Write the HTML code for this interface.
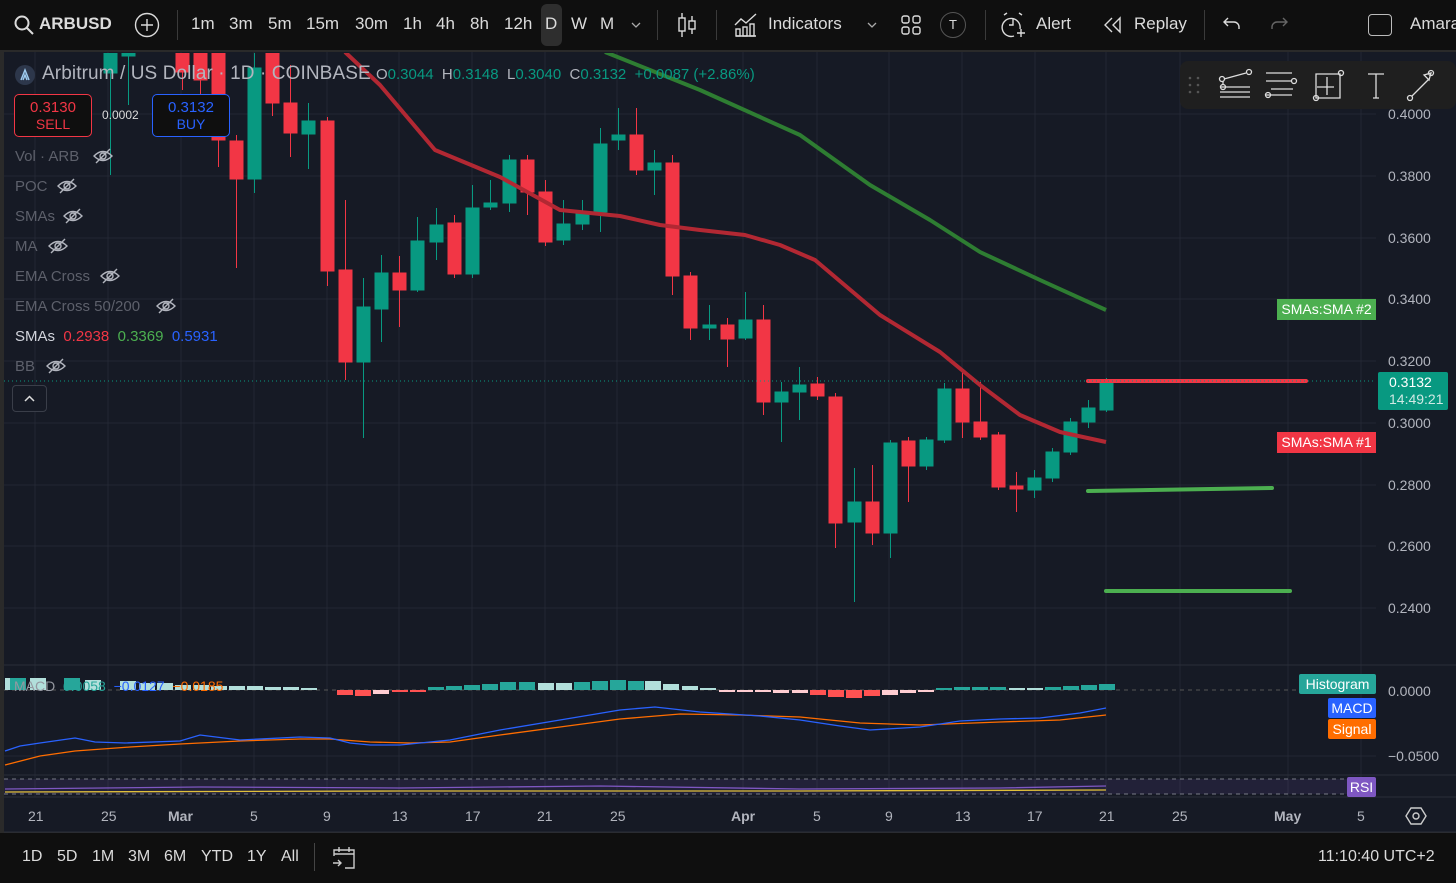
<!DOCTYPE html>
<html><head><meta charset="utf-8"><style>
*{margin:0;padding:0;box-sizing:border-box}
body{width:1456px;height:883px;overflow:hidden;background:#0f0f0f;font-family:"Liberation Sans",sans-serif;color:#d1d4dc;position:relative}
.a{position:absolute;white-space:nowrap}
.tb{font-size:17px;color:#dbdbdb;top:14px}
.sep{position:absolute;top:10px;width:1px;height:30px;background:#3a3a3a}
.leg{font-size:15px;color:#5d606b;left:15px}
.ax{font-size:14px;color:#b2b5be;font-family:"Liberation Sans",sans-serif}
.tl{font-size:14px;color:#b2b5be;top:808px}
.bb{font-size:16px;color:#dbdbdb;top:848px}
.eye{position:absolute;width:22px;height:16px}
</style></head><body>
<!-- top toolbar -->
<svg class="a" style="left:13px;top:14px" width="22" height="22" viewBox="0 0 22 22" fill="none" stroke="#dbdbdb" stroke-width="2"><circle cx="9" cy="9" r="6.5"/><path d="M14 14l6 6"/></svg>
<div class="a tb" style="left:39px;font-weight:bold">ARBUSD</div>
<svg class="a" style="left:134px;top:12px" width="26" height="26" viewBox="0 0 26 26" fill="none" stroke="#dbdbdb" stroke-width="1.4"><circle cx="13" cy="13" r="11.5"/><path d="M13 7v12M7 13h12"/></svg>
<div class="sep" style="left:177px"></div>
<div class="a" style="left:541px;top:4px;width:21px;height:42px;background:#2e2e2e;border-radius:6px"></div>
<div class="a tb" style="left:191px">1m</div><div class="a tb" style="left:229px">3m</div><div class="a tb" style="left:268px">5m</div><div class="a tb" style="left:306px">15m</div><div class="a tb" style="left:355px">30m</div><div class="a tb" style="left:403px">1h</div><div class="a tb" style="left:436px">4h</div><div class="a tb" style="left:470px">8h</div><div class="a tb" style="left:504px">12h</div><div class="a tb" style="left:545px">D</div><div class="a tb" style="left:571px">W</div><div class="a tb" style="left:600px">M</div>
<svg class="a" style="left:630px;top:20px" width="12" height="10" viewBox="0 0 12 10" fill="none" stroke="#aaa" stroke-width="1.3"><path d="M2 3l4 4 4-4"/></svg>
<div class="sep" style="left:657px"></div>
<svg class="a" style="left:676px;top:12px" width="22" height="26" viewBox="0 0 22 26" fill="none" stroke="#dbdbdb" stroke-width="1.4"><path d="M6 1v24M16 4v18"/><rect x="3" y="6" width="6" height="13" fill="#0f0f0f"/><rect x="13" y="9" width="6" height="8" fill="#0f0f0f"/></svg>
<div class="sep" style="left:716px"></div>
<svg class="a" style="left:733px;top:12px" width="26" height="26" viewBox="0 0 26 26" fill="none" stroke="#dbdbdb" stroke-width="1.4"><path d="M2 13l6-6 5 4 10-9M3 24h20"/><rect x="3" y="17" width="4" height="7"/><rect x="10" y="15" width="4" height="9"/><rect x="17" y="12" width="4" height="12"/></svg>
<div class="a tb" style="left:768px">Indicators</div>
<svg class="a" style="left:866px;top:20px" width="12" height="10" viewBox="0 0 12 10" fill="none" stroke="#aaa" stroke-width="1.3"><path d="M2 3l4 4 4-4"/></svg>
<svg class="a" style="left:900px;top:14px" width="22" height="22" viewBox="0 0 22 22" fill="none" stroke="#dbdbdb" stroke-width="1.4"><rect x="2" y="2" width="7" height="7" rx="2"/><rect x="13" y="2" width="7" height="7" rx="2"/><rect x="2" y="13" width="7" height="7" rx="2"/><rect x="13" y="13" width="7" height="7" rx="2"/></svg>
<div class="a" style="left:940px;top:12px;width:26px;height:26px;border:1px solid #555;border-radius:50%;font-size:13px;text-align:center;line-height:24px;color:#dbdbdb">T</div>
<div class="sep" style="left:985px"></div>
<svg class="a" style="left:1000px;top:11px" width="28" height="28" viewBox="0 0 28 28" fill="none" stroke="#dbdbdb" stroke-width="1.4"><path d="M20 18a9 9 0 1 0-6 7"/><path d="M13 8v6h-4M4 4l3-2M22 4l-3-2M21 18v8M17 22h8"/></svg>
<div class="a tb" style="left:1036px">Alert</div>
<svg class="a" style="left:1102px;top:16px" width="22" height="18" viewBox="0 0 22 18" fill="none" stroke="#dbdbdb" stroke-width="1.4"><path d="M10 2L3 9l7 7M18 2l-7 7 7 7z"/></svg>
<div class="a tb" style="left:1134px">Replay</div>
<div class="sep" style="left:1204px"></div>
<svg class="a" style="left:1222px;top:15px" width="20" height="18" viewBox="0 0 20 18" fill="none" stroke="#dbdbdb" stroke-width="1.4"><path d="M6 3L2 7l4 4M2 7h10a5 5 0 0 1 5 5v2"/></svg>
<svg class="a" style="left:1269px;top:15px" width="20" height="18" viewBox="0 0 20 18" fill="none" stroke="#666" stroke-width="1.4"><path d="M14 3l4 4-4 4M18 7H8a5 5 0 0 0-5 5v2"/></svg>
<div class="a" style="left:1368px;top:14px;width:24px;height:22px;border:1.5px solid #bbb;border-radius:4px"></div>
<div class="a tb" style="left:1410px">Amara</div>

<!-- chart area -->
<div class="a" style="left:0;top:50px;width:1456px;height:783px;background:#2a2a2a"></div>
<div class="a" style="left:4px;top:52px;width:1452px;height:780px;background:#161a25"></div>
<svg class="a" style="left:0;top:0" width="1456" height="883">
<defs><clipPath id="m"><rect x="4" y="53" width="1372" height="612"/></clipPath></defs>
<g stroke="#232733" stroke-width="1">
<path d="M4 114H1376M4 176H1376M4 238H1376M4 299H1376M4 361H1376M4 423H1376M4 485H1376M4 546H1376M4 608H1376"/>
<path d="M35 52V797M108 52V797M181 52V797M254 52V797M327 52V797M399 52V797M472 52V797M545 52V797M617 52V797M743 52V797M817 52V797M889 52V797M962 52V797M1035 52V797M1106 52V797M1180 52V797M1288 52V797M1361 52V797"/>
<path d="M4 756H1376"/>
</g>
<path d="M4 665H1456M4 775H1456M4 797H1456" stroke="#2a2e39"/>
<g clip-path="url(#m)">
<g stroke-width="1">
<g stroke="#089981" fill="#089981">
<path d="M110.5 50V175M128.5 50V105M254.5 50V193M308.5 103V169M363.5 278V438M381.5 255V342M417.5 217V292M436.5 208V260M472.5 185V278M490.5 180V210M509.5 155V212M563.5 200V245M582.5 200V230M600.5 128V232M618.5 108V150M654.5 150V195M709.5 305V340M745.5 292V340M781.5 382V442M799.5 367V420M854.5 468V602M890.5 440V558M926.5 437V470M944.5 383V443M1034.5 470V498M1052.5 448V482M1070.5 418V455M1088.5 400V428M1106.5 378V412"/>
<rect x="104" y="50" width="13" height="23"/><rect x="122" y="50" width="13" height="6"/><rect x="248" y="68" width="13" height="111"/><rect x="302" y="121" width="13" height="13"/><rect x="357" y="307" width="13" height="55"/><rect x="375" y="273" width="13" height="36"/><rect x="411" y="241" width="13" height="49"/><rect x="430" y="225" width="13" height="17"/><rect x="466" y="208" width="13" height="66"/><rect x="484" y="203" width="13" height="4"/><rect x="503" y="160" width="13" height="43"/><rect x="557" y="224" width="13" height="16"/><rect x="576" y="212" width="13" height="12"/><rect x="594" y="144" width="13" height="68"/><rect x="612" y="135" width="13" height="5"/><rect x="648" y="163" width="13" height="7"/><rect x="703" y="325" width="13" height="3"/><rect x="739" y="320" width="13" height="18"/><rect x="775" y="392" width="13" height="10"/><rect x="793" y="385" width="13" height="7"/><rect x="848" y="502" width="13" height="20"/><rect x="884" y="443" width="13" height="90"/><rect x="920" y="440" width="13" height="26"/><rect x="938" y="389" width="13" height="51"/><rect x="1028" y="478" width="13" height="12"/><rect x="1046" y="452" width="13" height="26"/><rect x="1064" y="422" width="13" height="30"/><rect x="1082" y="408" width="13" height="14"/><rect x="1100" y="382" width="13" height="28"/>
</g>
<g stroke="#f23645" fill="#f23645">
<path d="M182.5 50V90M200.5 50V115M218.5 50V167M236.5 135V268M272.5 50V116M290.5 65V157M327.5 117V286M345.5 200V380M399.5 256V327M454.5 215V278M527.5 155V215M545.5 180V246M636.5 108V175M672.5 155V295M690.5 272V340M727.5 318V367M763.5 305V415M817.5 377V400M835.5 393V548M872.5 465V545M908.5 437V502M962.5 372V438M980.5 382V440M998.5 432V490M1016.5 472V512"/>
<rect x="176" y="50" width="13" height="22"/><rect x="194" y="50" width="13" height="30"/><rect x="212" y="50" width="13" height="90"/><rect x="230" y="141" width="13" height="38"/><rect x="266" y="50" width="13" height="53"/><rect x="284" y="103" width="13" height="30"/><rect x="321" y="121" width="13" height="150"/><rect x="339" y="270" width="13" height="92"/><rect x="393" y="273" width="13" height="17"/><rect x="448" y="223" width="13" height="51"/><rect x="521" y="160" width="13" height="32"/><rect x="539" y="192" width="13" height="50"/><rect x="630" y="135" width="13" height="35"/><rect x="666" y="163" width="13" height="113"/><rect x="684" y="276" width="13" height="52"/><rect x="721" y="325" width="13" height="14"/><rect x="757" y="320" width="13" height="82"/><rect x="811" y="384" width="13" height="12"/><rect x="829" y="397" width="13" height="126"/><rect x="866" y="502" width="13" height="31"/><rect x="902" y="441" width="13" height="25"/><rect x="956" y="389" width="13" height="33"/><rect x="974" y="422" width="13" height="15"/><rect x="992" y="435" width="13" height="52"/><rect x="1010" y="486" width="13" height="3"/>
</g>
</g>
<polyline fill="none" stroke="#b22833" stroke-width="4" stroke-linejoin="round" points="345,52 380,85 435,150 500,177 560,210 620,216 660,225 700,230 745,235 780,245 815,260 880,315 940,352 980,385 1020,415 1060,432 1106,442"/>
<polyline fill="none" stroke="#2e7d32" stroke-width="4" stroke-linejoin="round" points="605,52 700,90 800,135 870,185 930,220 980,252 1040,280 1106,310"/>
<path d="M1088 381H1306" stroke="#f23645" stroke-width="4" stroke-linecap="round"/>
<path d="M1088 491L1272 488" stroke="#4caf50" stroke-width="4" stroke-linecap="round"/>
<path d="M1106 591H1290" stroke="#4caf50" stroke-width="4" stroke-linecap="round"/>
<path d="M4 381H1378" stroke="#089981" stroke-dasharray="1 3"/>
</g>
<!-- MACD -->
<path d="M4 690H1376" stroke="#555" stroke-dasharray="4 4"/>
<g fill="#b2dfdb"><rect x="5" y="678" width="12" height="12"/><rect x="30" y="678" width="16" height="12"/><rect x="85" y="680" width="16" height="10"/><rect x="120" y="681" width="16" height="9"/><rect x="139" y="683" width="16" height="7"/><rect x="157" y="683" width="16" height="7"/><rect x="175" y="685" width="16" height="5"/><rect x="193" y="685" width="16" height="5"/><rect x="211" y="686" width="16" height="4"/><rect x="229" y="686" width="16" height="4"/><rect x="247" y="686" width="16" height="4"/><rect x="265" y="687" width="16" height="3"/><rect x="283" y="687" width="16" height="3"/><rect x="301" y="688" width="16" height="2"/><rect x="538" y="683" width="16" height="7"/><rect x="556" y="683" width="16" height="7"/><rect x="645" y="681" width="16" height="9"/><rect x="663" y="684" width="16" height="6"/><rect x="682" y="686" width="16" height="4"/><rect x="700" y="688" width="16" height="2"/><rect x="1009" y="688" width="16" height="2"/><rect x="1027" y="688" width="16" height="2"/></g>
<g fill="#26a69a"><rect x="10" y="678" width="16" height="12"/><rect x="64" y="678" width="16" height="12"/><rect x="428" y="687" width="16" height="3"/><rect x="446" y="686" width="16" height="4"/><rect x="464" y="685" width="16" height="5"/><rect x="482" y="684" width="16" height="6"/><rect x="500" y="682" width="16" height="8"/><rect x="519" y="682" width="16" height="8"/><rect x="574" y="682" width="16" height="8"/><rect x="592" y="681" width="16" height="9"/><rect x="610" y="680" width="16" height="10"/><rect x="628" y="681" width="16" height="9"/><rect x="936" y="688" width="16" height="2"/><rect x="954" y="687" width="16" height="3"/><rect x="972" y="687" width="16" height="3"/><rect x="990" y="687" width="16" height="3"/><rect x="1045" y="687" width="16" height="3"/><rect x="1063" y="686" width="16" height="4"/><rect x="1081" y="685" width="16" height="5"/><rect x="1099" y="684" width="16" height="6"/></g>
<g fill="#ff5252"><rect x="337" y="690" width="16" height="5"/><rect x="355" y="690" width="16" height="6"/><rect x="392" y="690" width="16" height="2"/><rect x="410" y="690" width="16" height="2"/><rect x="810" y="690" width="16" height="5"/><rect x="828" y="690" width="16" height="7"/><rect x="846" y="690" width="16" height="8"/><rect x="864" y="690" width="16" height="6"/></g>
<g fill="#ffcdd2"><rect x="373" y="690" width="16" height="4"/><rect x="719" y="690" width="16" height="2"/><rect x="737" y="690" width="16" height="2"/><rect x="755" y="690" width="16" height="2"/><rect x="773" y="690" width="16" height="3"/><rect x="792" y="690" width="16" height="3"/><rect x="882" y="690" width="16" height="5"/><rect x="900" y="690" width="16" height="3"/><rect x="918" y="690" width="16" height="2"/></g>
<polyline fill="none" stroke="#ff6d00" stroke-width="1.3" points="5,765 40,756 75,751 130,747 180,744 240,741 300,739 330,739 370,742 410,743 450,742 500,735 560,727 620,719 680,714 740,715 800,717 860,723 920,725 1000,722 1060,720 1106,715"/>
<polyline fill="none" stroke="#2962ff" stroke-width="1.3" points="5,751 20,746 40,743 75,738 95,742 125,743 180,741 200,735 240,740 300,737 330,738 350,743 370,745 400,745 450,740 500,730 560,720 620,710 655,707 700,712 760,716 800,720 840,726 870,730 920,727 960,721 1000,719 1040,718 1080,713 1106,708"/>
<!-- RSI -->
<rect x="4" y="779" width="1372" height="15" fill="#7e57c2" fill-opacity="0.12"/>
<path d="M4 779H1376M4 794H1376" stroke="#787b86" stroke-dasharray="4 4"/>
<polyline fill="none" stroke="#7e57c2" stroke-width="1.3" points="5,789 200,787 400,788 600,786 800,789 1000,788 1106,786"/>
<polyline fill="none" stroke="#e0c03a" stroke-width="1.3" points="5,792 400,791 800,791 1106,790"/>
<path d="M4 832H1456" stroke="#2a2e39"/>
<!-- eye-slash icons -->
<g fill="none" stroke="#b2b5be" stroke-width="1.4">
<g transform="translate(92,148)"><path d="M2 8q9-9 18 0q-9 9-18 0z"/><circle cx="11" cy="8" r="3"/><path d="M4 15L18 1"/></g>
<g transform="translate(56,178)"><path d="M2 8q9-9 18 0q-9 9-18 0z"/><circle cx="11" cy="8" r="3"/><path d="M4 15L18 1"/></g>
<g transform="translate(62,208)"><path d="M2 8q9-9 18 0q-9 9-18 0z"/><circle cx="11" cy="8" r="3"/><path d="M4 15L18 1"/></g>
<g transform="translate(47,238)"><path d="M2 8q9-9 18 0q-9 9-18 0z"/><circle cx="11" cy="8" r="3"/><path d="M4 15L18 1"/></g>
<g transform="translate(99,268)"><path d="M2 8q9-9 18 0q-9 9-18 0z"/><circle cx="11" cy="8" r="3"/><path d="M4 15L18 1"/></g>
<g transform="translate(155,298)"><path d="M2 8q9-9 18 0q-9 9-18 0z"/><circle cx="11" cy="8" r="3"/><path d="M4 15L18 1"/></g>
<g transform="translate(45,358)"><path d="M2 8q9-9 18 0q-9 9-18 0z"/><circle cx="11" cy="8" r="3"/><path d="M4 15L18 1"/></g>
</g>
</svg>

<!-- legend -->
<svg class="a" style="left:14px;top:64px" width="22" height="22" viewBox="0 0 22 22"><circle cx="11" cy="11" r="10" fill="#2d374b"/><path d="M7 16l4-10 4 10M9 16l2-5 2 5" stroke="#9ecbf0" stroke-width="1.5" fill="none"/></svg>
<div class="a" style="left:42px;top:63px;font-size:19px;color:#b2b5be;letter-spacing:0.1px">Arbitrum / US Dollar · 1D · COINBASE</div>
<div class="a" style="left:376px;top:66px;font-size:15px;color:#b2b5be">O<span style="color:#089981">0.3044</span>&nbsp; H<span style="color:#089981">0.3148</span>&nbsp; L<span style="color:#089981">0.3040</span>&nbsp; C<span style="color:#089981">0.3132</span>&nbsp; <span style="color:#089981">+0.0087 (+2.86%)</span></div>
<div class="a" style="left:14px;top:94px;width:78px;height:43px;border:1px solid #f23645;border-radius:5px;background:#0f0f0f;text-align:center;color:#f23645"><div style="font-size:15px;margin-top:4px">0.3130</div><div style="font-size:14px">SELL</div></div>
<div class="a" style="left:102px;top:108px;font-size:12px;color:#dbdbdb">0.0002</div>
<div class="a" style="left:152px;top:94px;width:78px;height:43px;border:1px solid #2962ff;border-radius:5px;background:#0f0f0f;text-align:center;color:#2962ff"><div style="font-size:15px;margin-top:4px">0.3132</div><div style="font-size:14px">BUY</div></div>
<div class="a leg" style="top:148px">Vol · ARB</div>
<div class="a leg" style="top:178px">POC</div>
<div class="a leg" style="top:208px">SMAs</div>
<div class="a leg" style="top:238px">MA</div>
<div class="a leg" style="top:268px">EMA Cross</div>
<div class="a leg" style="top:298px">EMA Cross 50/200</div>
<div class="a leg" style="top:328px;color:#d1d4dc">SMAs&nbsp; <span style="color:#f23645">0.2938</span>&nbsp; <span style="color:#4caf50">0.3369</span>&nbsp; <span style="color:#2962ff">0.5931</span></div>
<div class="a leg" style="top:358px">BB</div>
<div class="a" style="left:12px;top:385px;width:35px;height:27px;border:1px solid #3a3e49;border-radius:4px;background:#161a25"><svg width="33" height="25" viewBox="0 0 33 25" fill="none" stroke="#ddd" stroke-width="1.5"><path d="M12 15l4.5-4.5L21 15"/></svg></div>
<div class="a" style="left:14px;top:678px;font-size:14px;color:#9598a1">MACD&nbsp;&nbsp;<span style="color:#26a69a">0.0058</span>&nbsp; <span style="color:#2962ff">−0.0127</span>&nbsp; <span style="color:#ff6d00">−0.0185</span></div>

<!-- drawing toolbar -->
<div class="a" style="left:1180px;top:61px;width:276px;height:48px;background:#1f1f1f;border-radius:8px"></div>
<svg class="a" style="left:1180px;top:61px" width="276" height="48" viewBox="0 0 276 48" fill="none" stroke="#ddd" stroke-width="1.3">
<g fill="#555" stroke="none"><circle cx="10" cy="17" r="1.3"/><circle cx="18" cy="17" r="1.3"/><circle cx="10" cy="24" r="1.3"/><circle cx="18" cy="24" r="1.3"/><circle cx="10" cy="31" r="1.3"/><circle cx="18" cy="31" r="1.3"/></g>
<path d="M40 26h30M40 31h30M40 36h30M44 18l22-6M43 20v4"/><circle cx="42" cy="18" r="2.5"/><circle cx="43" cy="26" r="2.5"/><circle cx="69" cy="11" r="2.5"/>
<path d="M86 12h26M86 20h26M91 28h22M86 34h26"/><circle cx="114" cy="20" r="2.5"/><circle cx="88" cy="34" r="2.5"/>
<path d="M136 13h24v24h-24zM137 26h17M147 16v18"/><circle cx="136" cy="37" r="2.5"/><circle cx="161" cy="12" r="2.5"/>
<path d="M188 13h16M196 13v24M193 37h6"/>
<path d="M232 35l17-17M244 14l7-2-2 7z"/><circle cx="230" cy="37" r="2.5"/><circle cx="251" cy="12" r="2.5"/>
</svg>

<!-- price axis -->
<div class="a ax" style="left:1388px;top:106px">0.4000</div>
<div class="a ax" style="left:1388px;top:168px">0.3800</div>
<div class="a ax" style="left:1388px;top:230px">0.3600</div>
<div class="a ax" style="left:1388px;top:291px">0.3400</div>
<div class="a ax" style="left:1388px;top:353px">0.3200</div>
<div class="a ax" style="left:1388px;top:415px">0.3000</div>
<div class="a ax" style="left:1388px;top:477px">0.2800</div>
<div class="a ax" style="left:1388px;top:538px">0.2600</div>
<div class="a ax" style="left:1388px;top:600px">0.2400</div>
<div class="a ax" style="left:1388px;top:683px">0.0000</div>
<div class="a ax" style="left:1388px;top:748px">−0.0500</div>
<div class="a" style="left:1277px;top:299px;width:99px;height:21px;background:#4caf50;color:#fff;font-size:14px;text-align:center;line-height:21px">SMAs:SMA #2</div>
<div class="a" style="left:1277px;top:432px;width:99px;height:21px;background:#f23645;color:#fff;font-size:14px;text-align:center;line-height:21px">SMAs:SMA #1</div>
<div class="a" style="left:1378px;top:372px;width:70px;height:38px;background:#089981;border-radius:2px;color:#fff;font-size:14px;padding-left:11px;line-height:17px;padding-top:2px">0.3132<br><span style="color:#cfe9e4">14:49:21</span></div>
<div class="a" style="left:1299px;top:674px;width:77px;height:20px;background:#26a69a;border-radius:2px;color:#fff;font-size:14px;text-align:center;line-height:20px">Histogram</div>
<div class="a" style="left:1328px;top:698px;width:48px;height:20px;background:#2962ff;border-radius:2px;color:#fff;font-size:14px;text-align:center;line-height:20px">MACD</div>
<div class="a" style="left:1328px;top:719px;width:48px;height:20px;background:#ff6d00;border-radius:2px;color:#fff;font-size:14px;text-align:center;line-height:20px">Signal</div>
<div class="a" style="left:1347px;top:777px;width:29px;height:20px;background:#7e57c2;border-radius:2px;color:#fff;font-size:14px;text-align:center;line-height:20px">RSI</div>

<!-- time axis -->
<div class="a tl" style="left:28px">21</div><div class="a tl" style="left:101px">25</div><div class="a tl" style="left:168px;font-weight:bold">Mar</div><div class="a tl" style="left:250px">5</div><div class="a tl" style="left:323px">9</div><div class="a tl" style="left:392px">13</div><div class="a tl" style="left:465px">17</div><div class="a tl" style="left:537px">21</div><div class="a tl" style="left:610px">25</div><div class="a tl" style="left:731px;font-weight:bold">Apr</div><div class="a tl" style="left:813px">5</div><div class="a tl" style="left:885px">9</div><div class="a tl" style="left:955px">13</div><div class="a tl" style="left:1027px">17</div><div class="a tl" style="left:1099px">21</div><div class="a tl" style="left:1172px">25</div><div class="a tl" style="left:1274px;font-weight:bold">May</div><div class="a tl" style="left:1357px">5</div>
<svg class="a" style="left:1405px;top:806px" width="22" height="20" viewBox="0 0 22 20" fill="none" stroke="#ccc" stroke-width="1.4"><path d="M6 2h10l5 8-5 8H6L1 10z"/><circle cx="11" cy="10" r="3"/></svg>

<!-- bottom bar -->
<div class="a bb" style="left:22px">1D</div><div class="a bb" style="left:57px">5D</div><div class="a bb" style="left:92px">1M</div><div class="a bb" style="left:128px">3M</div><div class="a bb" style="left:164px">6M</div><div class="a bb" style="left:201px">YTD</div><div class="a bb" style="left:247px">1Y</div><div class="a bb" style="left:281px">All</div>
<div class="a" style="left:314px;top:843px;width:1px;height:28px;background:#444"></div>
<svg class="a" style="left:331px;top:844px" width="26" height="26" viewBox="0 0 26 26" fill="none" stroke="#ccc" stroke-width="1.4"><path d="M3 12V6h20v18h-9M3 10h20M8 3v5M18 3v5M2 19h8M7 16l3 3-3 3"/></svg>
<div class="a bb" style="left:1318px">11:10:40 UTC+2</div>
</body></html>
